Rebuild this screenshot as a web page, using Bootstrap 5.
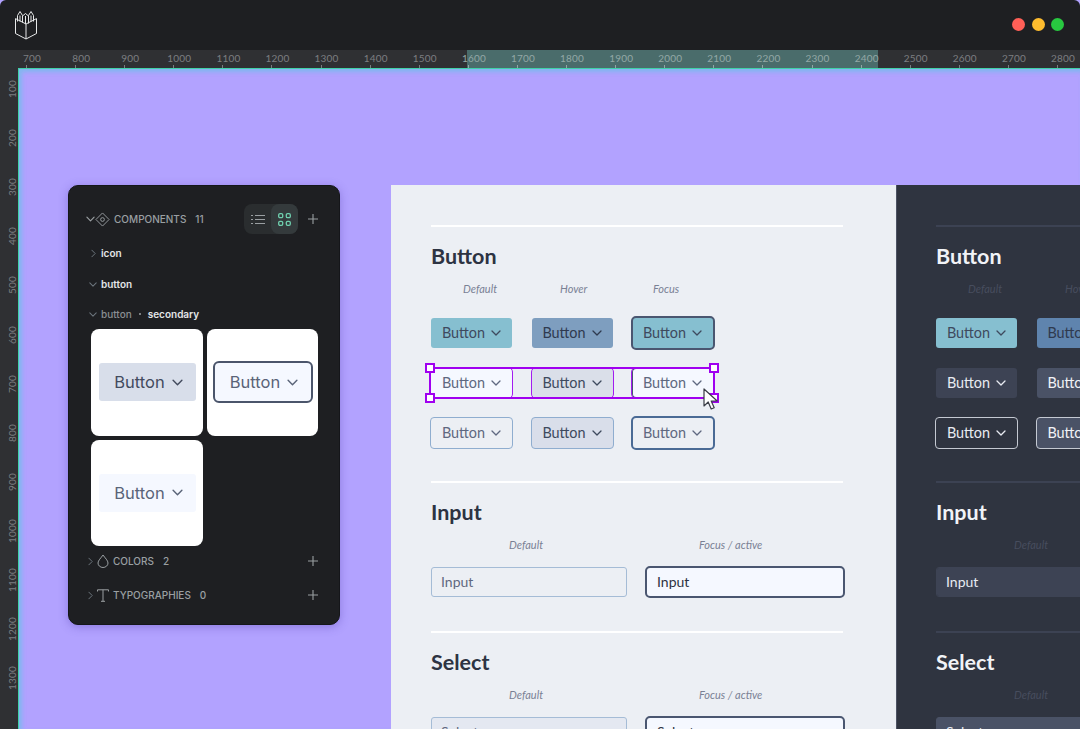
<!DOCTYPE html>
<html lang="en">
<head>
  <meta charset="UTF-8">
  <meta name="viewport" content="width=device-width, initial-scale=1.0">
  <title>Design system</title>
  <link href="https://cdn.jsdelivr.net/npm/bootstrap@5.3.3/dist/css/bootstrap.min.css" rel="stylesheet">
  <style>
    html, body { height: 100%; }
    body { background: #b2a2ff; overflow: hidden; font-family: "Lato", "Liberation Sans", sans-serif; }
    .app-shell { width: 1080px; height: 729px; }

    /* top bar and rulers */
    .top-bar { flex: 0 0 50px; background: #1e1f22; border-radius: 6px 6px 0 0; padding: 0 15px; }
    .traffic { width: 13px; height: 13px; border-radius: 50%; }
    .traffic-r { background: #ff5f57; }
    .traffic-y { background: #febc2e; }
    .traffic-g { background: #28c840; }
    .traffic-set { gap: 6.5px; padding-right: 1px; margin-top: -1px; }
    .ruler-top { flex: 0 0 18px; padding-left: 7.5px; color: #7c7e81; font: 400 10px/1 "Lato", sans-serif; letter-spacing: .2px;
      background: linear-gradient(90deg, #2f3033 467px, #4a6c6b 467px, #4a6c6b 878px, #2f3033 878px); }
    .ruler-cell { flex: 0 0 49.1px; text-align: center; padding-top: 3px; }
    .ruler-cell.lit { color: #93a8a6; }
    .ruler-tick { width: 1px; height: 3px; margin: 2px 0 0 18.5px; background: currentColor; }
    .ruler-left { flex: 0 0 18px; background: #2f3033; color: #7c7e81; font: 400 10px/1 "Lato", sans-serif; letter-spacing: .2px; }
    .ruler-vcell { height: 49.1px; display: flex; justify-content: center; align-items: center; padding-left: 5px; }
    .ruler-vcell:first-child { margin-top: -3.5px; }
    .ruler-vcell span { writing-mode: vertical-rl; transform: rotate(180deg); }

    /* canvas */
    .canvas-area { flex: 1 1 0; min-width: 0; padding: 116px 0 0 49px; gap: 51px; background: #b2a2ff;
      border-top: 1px solid #3fd0a8; border-left: 1px solid #3fd0a8;
      box-shadow: inset 3px 3px 4px rgba(90, 200, 225, .55); }

    /* components panel */
    .side-panel { flex: 0 0 272px; height: 440px; background: #1e1f22; border: 1px solid #15161a; border-radius: 10px; padding: 18px 21px 0 17px;
      box-shadow: 0 2px 10px rgba(70, 50, 160, .35); font-family: "Inter", sans-serif; }
    .panel-head { height: 30px; color: #9a9fa2; font-size: 10px; font-weight: 500; }
    .panel-sub { padding-left: 2px; }
    .panel-count { margin-left: 9px; }
    .view-toggle { width: 54px; height: 30px; background: #2a2d2f; border-radius: 8px; }
    .view-toggle > div { width: 27px; height: 30px; border-radius: 8px; }
    .view-toggle .on { background: #343a3c; }
    .tree-row { height: 30px; padding-left: 3px; color: #e4e6e8; font-size: 10px; font-weight: 600; gap: 4px; }
    .tree-first { height: 31px; margin-top: 4px; }
    .tree-chev { margin: 0 1px 0 2px; }
    .tree-dim { color: #8b8f93; font-weight: 500; }
    .tree-dot { width: 2px; height: 2px; background: #9a9fa2; border-radius: 50%; margin: 0 3px; }
    .card-grid { display: grid; grid-template-columns: 112px 111px; grid-auto-rows: 106.5px; gap: 4px; margin: 0 0 0 5px; }
    .comp-card { background: #fff; border-radius: 8px; }
    .comp-btn { font: 400 16.5px/1 "Inter", sans-serif; border-radius: 3px; height: 38px; width: 97px; gap: 7px; padding-left: 3px; color: #434b5e; }
    .comp-a { background: #d8deea; }
    .comp-b { background: #f5f8ff; border: 2px solid #4b556b; width: 100px; height: 42px; border-radius: 6px; color: #5a6478; }
    .comp-c { background: #f5f8ff; color: #5a6478; }
    .plus-mark { margin-left: auto; }
    .plus-gap { margin-left: 10px; }

    /* boards */
    .board { flex: 0 0 505px; width: 505px; min-width: 0; height: 620px; padding: 40px 53px 0 40px; }
    .board-light { background: #eceff4; color: #2d3342; }
    .board-dark { background: #2f3440; color: #f1f3f7; border-left: 1px solid #4c5263; padding-left: 39px; }
    .rule-line { height: 1.5px; background: #fff; width: 412px; }
    .board-dark .rule-line { background: #3c4253; }
    .sec-title { font-size: 21.5px; line-height: 30px; font-weight: 700; margin: 14.5px 0 0; }
    .state-row { display: flex; font-size: 11px; line-height: 14px; font-style: italic; color: #7a8194; margin-top: 11px; }
    .board-dark .state-row { color: #474d5e; }
    .st-a { margin-left: 32px; width: 97px; }
    .st-b { width: 93px; }
    .st-in { margin-left: 78px; width: 190px; }
    .btn-grid { display: grid; grid-template-columns: repeat(3, 100.5px); grid-auto-rows: 50px; justify-items: center; align-items: center;
      margin: 12px 0 23px -9.75px; width: max-content; }
    .ds-btn { width: 81px; height: 30px; padding: 0; gap: 6px; font-size: 14.4px; line-height: 1; border-radius: 3px; border: 0;
      display: flex; align-items: center; justify-content: center; font-family: "Lato", sans-serif; }
    .is-focus { width: 84px; height: 34px; border: 2px solid #4a5670; border-radius: 5px; }
    .is-line { width: 83px; height: 32px; border: 1.5px solid #8fadcf; border-radius: 4px; }
    .p-base { background: #86bfd0; color: #3e4a5e; }
    .p-hover { background: #7e9ebf; color: #2f3a4f; }
    .s-base { background: #f5f8ff; color: #5f6880; border: 1px solid #a21cf0; border-radius: 5px; width: 83px; height: 32px; }
    .s-hover { background: #dadfe9; color: #3e4a5e; border: 1px solid #a21cf0; border-radius: 5px; width: 83px; height: 32px; }
    .s-focus { background: #f5f8ff; color: #5f6880; border: 1px solid #a21cf0; box-shadow: inset 0 0 0 1px #4a5670; border-radius: 5px; width: 84px; height: 32px; }
    .o-base { background: #eceff4; color: #5f6880; }
    .o-hover { background: #d9deea; color: #3e4a5e; }
    .o-focus { background: #eceff4; color: #5f6880; border-color: #4a6a95; }
    .board-dark .p-hover { background: #5f84ae; }
    .board-dark .d-soft { background: #3d4354; color: #e8ebf2; }
    .board-dark .d-soft2 { background: #4a5266; color: #f1f3f7; }
    .board-dark .d-line { background: transparent; color: #e8ebf2; border-color: #c4c9d2; }
    .board-dark .d-line2 { background: #4a5266; color: #f1f3f7; border-color: #c4c9d2; }

    .input-pair { display: grid; grid-template-columns: 196px 200px; grid-auto-rows: 32px; gap: 18px; align-items: center; margin: 14px 0 33px; }
    .ds-field { height: 30px; min-height: 0; padding: 0 10px 2px 9px; font-size: 14px; border-radius: 3px; font-family: "Lato", sans-serif;
      background-color: #eceff4; border: 1px solid #a5bcd6; color: #5f6880; background-size: 10px 8px; }
    .ds-active { height: 32px; padding-left: 10px; background-color: #f5f8ff; border: 2px solid #4a5670; border-radius: 5px; color: #2d3342; }
    .ds-select { background-color: #e4e8f1; }
    .board-dark .ds-field { background-color: #3d4354; border-color: #3d4354; color: #e8ebf2; }
    .board-dark .ds-select { background-color: #4a5266; border-color: #4a5266; }

    /* selection over the second row */
    .sel-box { left: 8px; top: 59px; width: 286px; height: 32px; border: 2px solid #a000f0; pointer-events: none; }
    .sel-dot { width: 10px; height: 10px; background: #fff; border: 2px solid #a000f0; }
    .dot-tl { left: -6px; top: -6px; }
    .dot-bl { left: -6px; bottom: -6px; }
    .dot-tr { right: -6px; top: -6px; }
    .dot-br { right: -6px; bottom: -6px; }
    .mouse-arrow { left: 272px; top: 19px; }
  </style>
</head>
<body>
  <svg width="0" height="0" class="d-none">
    <symbol id="chev" viewBox="0 0 10 6"><path d="M1 1l4 4 4-4" fill="none" stroke="currentColor" stroke-width="1.3" stroke-linecap="round" stroke-linejoin="round"/></symbol>
    <symbol id="chevr" viewBox="0 0 6 10"><path d="M1 1l4 4-4 4" fill="none" stroke="currentColor" stroke-width="1.2" stroke-linecap="round" stroke-linejoin="round"/></symbol>
    <symbol id="plus" viewBox="0 0 10 10"><path d="M5 0v10M0 5h10" stroke="#9a9fa2" stroke-width="1.1"/></symbol>
  </svg>

  <div class="app-shell d-flex flex-column">
    <div class="top-bar d-flex align-items-center justify-content-between">
      <svg width="22" height="30" viewBox="0 0 22 30" fill="none" stroke="#e8e9ea" stroke-width="1" stroke-linejoin="round">
        <path d="M.5 8.600L11 14 21.500 8.600V23.500L11 29 .5 23.500z"/>
        <path d="M11 14V29"/>
        <path d="M2.500 11.500V5.500L5 1.500 7.500 5.500V12.500M5 5.500V11.500"/>
        <path d="M7.500 6L10.500 3.500 13.500 6V13.500M10.500 6V14"/>
        <path d="M13.500 12.500V5.500L16 1.500 18.500 5.500V11.500M16 5.500V11.500"/>
      </svg>
      <div class="d-flex traffic-set">
        <div class="traffic traffic-r"></div>
        <div class="traffic traffic-y"></div>
        <div class="traffic traffic-g"></div>
      </div>
    </div>
    <div class="ruler-top d-flex overflow-hidden" id="rulerTop"></div>
    <div class="d-flex flex-grow-1 overflow-hidden">
      <div class="ruler-left overflow-hidden" id="rulerLeft"></div>
      <div class="canvas-area d-flex align-items-start overflow-hidden">

        <div class="side-panel flex-shrink-0">
          <div class="panel-head d-flex align-items-center">
            <svg width="9" height="6"><use href="#chev"/></svg>
            <svg width="15" height="15" viewBox="0 0 16 16" fill="none" stroke="#9a9fa2"><path d="M8 1l7 7-7 7-7-7z"/><circle cx="8" cy="8" r="2"/></svg>
            <span class="ms-1">COMPONENTS</span><span class="panel-count">11</span>
            <div class="view-toggle d-flex ms-auto">
              <div class="d-flex align-items-center justify-content-center">
                <svg width="14" height="11" viewBox="0 0 14 11" fill="none" stroke="#9a9fa2"><path d="M4 1.500h10M4 5.500h10M4 9.500h10M0 1.500h2M0 5.500h2M0 9.500h2"/></svg>
              </div>
              <div class="on d-flex align-items-center justify-content-center">
                <svg width="13" height="13" viewBox="0 0 13 13" fill="none" stroke="#6fcfae" stroke-width="1.3"><rect x=".7" y=".7" width="4" height="4" rx="1.300"/><rect x="8.300" y=".7" width="4" height="4" rx="1.300"/><rect x=".7" y="8.300" width="4" height="4" rx="1.300"/><rect x="8.300" y="8.300" width="4" height="4" rx="1.300"/></svg>
              </div>
            </div>
            <svg width="10" height="10" class="plus-gap flex-shrink-0"><use href="#plus"/></svg>
          </div>

          <div class="tree-row tree-first d-flex align-items-center"><svg width="5" height="9" class="tree-chev text-secondary"><use href="#chevr"/></svg><span>icon</span></div>
          <div class="tree-row d-flex align-items-center"><svg width="8" height="5" class="text-secondary"><use href="#chev"/></svg><span>button</span></div>
          <div class="tree-row d-flex align-items-center">
            <svg width="8" height="5" class="text-secondary"><use href="#chev"/></svg>
            <span class="tree-dim">button</span><span class="tree-dot"></span><span>secondary</span>
          </div>

          <div class="card-grid">
            <div class="comp-card d-flex align-items-center justify-content-center">
              <div class="comp-btn comp-a d-flex align-items-center justify-content-center">Button <svg width="11" height="7"><use href="#chev"/></svg></div>
            </div>
            <div class="comp-card d-flex align-items-center justify-content-center">
              <div class="comp-btn comp-b d-flex align-items-center justify-content-center">Button <svg width="11" height="7"><use href="#chev"/></svg></div>
            </div>
            <div class="comp-card d-flex align-items-center justify-content-center">
              <div class="comp-btn comp-c d-flex align-items-center justify-content-center">Button <svg width="11" height="7"><use href="#chev"/></svg></div>
            </div>
          </div>

          <div class="panel-head panel-sub d-flex align-items-center">
            <svg width="5" height="9" class="text-secondary"><use href="#chevr"/></svg>
            <svg width="12" height="14" viewBox="0 0 12 14" fill="none" stroke="#9a9fa2" class="ms-1"><path d="M6 1C4 4 1 6.500 1 9a5 4.500 0 0 0 10 0C11 6.500 8 4 6 1z"/></svg>
            <span class="ms-1">COLORS</span><span class="panel-count">2</span>
            <svg width="10" height="10" class="plus-mark"><use href="#plus"/></svg>
          </div>
          <div class="panel-head panel-sub d-flex align-items-center mt-1">
            <svg width="5" height="9" class="text-secondary"><use href="#chevr"/></svg>
            <svg width="12" height="13" viewBox="0 0 12 13" fill="none" stroke="#9a9fa2" class="ms-1"><path d="M.5 2.500V.8h11v1.700M6 .8v11.500M4 12.300h4"/></svg>
            <span class="ms-1">TYPOGRAPHIES</span><span class="panel-count">0</span>
            <svg width="10" height="10" class="plus-mark"><use href="#plus"/></svg>
          </div>
        </div>

        <div class="d-flex flex-shrink-0">
          <section class="board board-light">
            <div class="rule-line"></div>
            <h2 class="sec-title">Button</h2>
            <div class="state-row"><span class="st-a">Default</span><span class="st-b">Hover</span><span>Focus</span></div>
            <div class="btn-grid position-relative">
              <button class="btn ds-btn p-base">Button <svg width="10" height="6"><use href="#chev"/></svg></button>
              <button class="btn ds-btn p-hover">Button <svg width="10" height="6"><use href="#chev"/></svg></button>
              <button class="btn ds-btn p-base is-focus">Button <svg width="10" height="6"><use href="#chev"/></svg></button>
              <button class="btn ds-btn s-base">Button <svg width="10" height="6"><use href="#chev"/></svg></button>
              <button class="btn ds-btn s-hover">Button <svg width="10" height="6"><use href="#chev"/></svg></button>
              <button class="btn ds-btn s-focus">Button <svg width="10" height="6"><use href="#chev"/></svg></button>
              <button class="btn ds-btn is-line o-base">Button <svg width="10" height="6"><use href="#chev"/></svg></button>
              <button class="btn ds-btn is-line o-hover">Button <svg width="10" height="6"><use href="#chev"/></svg></button>
              <button class="btn ds-btn is-focus o-focus">Button <svg width="10" height="6"><use href="#chev"/></svg></button>
              <div class="sel-box position-absolute">
                <div class="sel-dot dot-tl position-absolute"></div>
                <div class="sel-dot dot-bl position-absolute"></div>
                <div class="sel-dot dot-tr position-absolute"></div>
                <div class="sel-dot dot-br position-absolute"></div>
                <svg class="mouse-arrow position-absolute" width="15" height="23" viewBox="0 0 15 23"><path d="M1 1v17l4.200-4 3 7 3-1.300-3-6.700h6z" fill="#fff" stroke="#3a3d46" stroke-width="1.200" stroke-linejoin="round"/></svg>
              </div>
            </div>
            <div class="rule-line"></div>
            <h2 class="sec-title">Input</h2>
            <div class="state-row"><span class="st-in">Default</span><span>Focus / active</span></div>
            <div class="input-pair">
              <input class="form-control ds-field" value="Input">
              <input class="form-control ds-field ds-active" value="Input">
            </div>
            <div class="rule-line"></div>
            <h2 class="sec-title">Select</h2>
            <div class="state-row"><span class="st-in">Default</span><span>Focus / active</span></div>
            <div class="input-pair">
              <select class="form-select ds-field ds-select"><option>Select</option></select>
              <select class="form-select ds-field ds-active"><option>Select</option></select>
            </div>
          </section>

          <section class="board board-dark">
            <div class="rule-line"></div>
            <h2 class="sec-title">Button</h2>
            <div class="state-row"><span class="st-a">Default</span><span class="st-b">Hover</span><span>Focus</span></div>
            <div class="btn-grid">
              <button class="btn ds-btn p-base">Button <svg width="10" height="6"><use href="#chev"/></svg></button>
              <button class="btn ds-btn p-hover">Button <svg width="10" height="6"><use href="#chev"/></svg></button>
              <button class="btn ds-btn p-base is-focus">Button <svg width="10" height="6"><use href="#chev"/></svg></button>
              <button class="btn ds-btn d-soft">Button <svg width="10" height="6"><use href="#chev"/></svg></button>
              <button class="btn ds-btn d-soft2">Button <svg width="10" height="6"><use href="#chev"/></svg></button>
              <button class="btn ds-btn d-soft">Button <svg width="10" height="6"><use href="#chev"/></svg></button>
              <button class="btn ds-btn is-line d-line">Button <svg width="10" height="6"><use href="#chev"/></svg></button>
              <button class="btn ds-btn is-line d-line2">Button <svg width="10" height="6"><use href="#chev"/></svg></button>
              <button class="btn ds-btn is-line d-line">Button <svg width="10" height="6"><use href="#chev"/></svg></button>
            </div>
            <div class="rule-line"></div>
            <h2 class="sec-title">Input</h2>
            <div class="state-row"><span class="st-in">Default</span><span>Focus / active</span></div>
            <div class="input-pair">
              <input class="form-control ds-field" value="Input">
              <input class="form-control ds-field" value="Input">
            </div>
            <div class="rule-line"></div>
            <h2 class="sec-title">Select</h2>
            <div class="state-row"><span class="st-in">Default</span><span>Focus / active</span></div>
            <div class="input-pair">
              <select class="form-select ds-field ds-select"><option>Select</option></select>
              <select class="form-select ds-field ds-select"><option>Select</option></select>
            </div>
          </section>
        </div>
      </div>
    </div>
  </div>

  <script>
    // ruler labels
    const topRuler = document.getElementById('rulerTop');
    for (let v = 700; v <= 2800; v += 100) {
      const x = 7.5 + (v - 700) / 100 * 49.1 + 24.5;
      const lit = x > 467 && x < 878 ? ' lit' : '';
      topRuler.innerHTML += `<div class="ruler-cell${lit}">${v}<div class="ruler-tick"></div></div>`;
    }
    const leftRuler = document.getElementById('rulerLeft');
    for (let v = 100; v <= 1300; v += 100) {
      leftRuler.innerHTML += `<div class="ruler-vcell"><span>${v}</span></div>`;
    }
  </script>
  <script src="https://cdn.jsdelivr.net/npm/bootstrap@5.3.3/dist/js/bootstrap.bundle.min.js"></script>
</body>
</html>
